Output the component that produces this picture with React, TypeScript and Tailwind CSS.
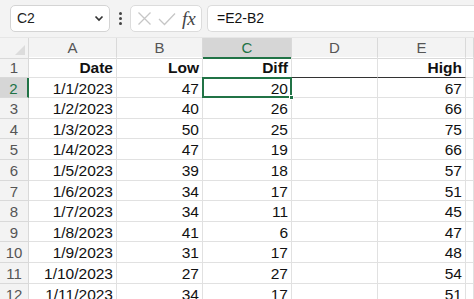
import React from "react";

const rows: [string, number, number, number][] = [
  ["1/1/2023", 47, 20, 67],
  ["1/2/2023", 40, 26, 66],
  ["1/3/2023", 50, 25, 75],
  ["1/4/2023", 47, 19, 66],
  ["1/5/2023", 39, 18, 57],
  ["1/6/2023", 34, 17, 51],
  ["1/7/2023", 34, 11, 45],
  ["1/8/2023", 41, 6, 47],
  ["1/9/2023", 31, 17, 48],
  ["1/10/2023", 27, 27, 54],
  ["1/11/2023", 34, 17, 51],
];

const cols = ["A", "B", "C", "D", "E", ""];
const grid = "grid grid-cols-[29px_88px_86px_89px_86px_88px_1fr]";
const cell = "h-[20.6px] border-r border-b border-[#e1e1e1] text-right pr-[3px] leading-[21px] whitespace-nowrap overflow-hidden text-[#111]";

export default function App() {
  return (
    <div className="w-[474px] h-[299px] overflow-hidden bg-white text-[#222]" style={{ fontFamily: '"Liberation Sans", Arial, sans-serif' }}>
      {/* Formula bar */}
      <div className="h-[37px] bg-[#f3f3f3] flex items-center pl-[10px] gap-0">
        <div className="w-[100px] h-[27px] bg-white border border-[#d4d4d4] rounded-[5px] flex items-center pl-[6px] pr-[5px] justify-between">
          <span className="text-[14px]">C2</span>
          <svg width="10" height="7" viewBox="0 0 10 7"><path d="M1.5 1.5 L5 5 L8.5 1.5" stroke="#333" strokeWidth="1.7" fill="none" /></svg>
        </div>
        <div className="w-[20px] flex flex-col items-center gap-[2px]">
          <span className="w-[3px] h-[3px] bg-[#444] rounded-full" />
          <span className="w-[3px] h-[3px] bg-[#444] rounded-full" />
          <span className="w-[3px] h-[3px] bg-[#444] rounded-full" />
        </div>
        <div className="w-[72px] h-[27px] bg-white border border-[#dcdcdc] rounded-[5px] flex items-center pl-[6px] gap-[6px]">
          <svg width="15" height="15" viewBox="0 0 15 15"><path d="M1.5 1.5 L13.5 13.5 M13.5 1.5 L1.5 13.5" stroke="#c6c6c6" strokeWidth="1.3" fill="none" /></svg>
          <svg width="18" height="14" viewBox="0 0 18 14"><path d="M1 7 L6.5 12.5 L17 1.5" stroke="#c6c6c6" strokeWidth="1.3" fill="none" /></svg>
          <span className="text-[19px] italic text-[#444] leading-none" style={{ fontFamily: '"Liberation Serif", serif' }}>fx</span>
        </div>
        <div className="ml-[5px] flex-1 h-[27px] bg-white border border-[#dcdcdc] rounded-l-[5px] border-r-0 flex items-center pl-[9px]">
          <span className="text-[14px] text-[#111]">=E2-B2</span>
        </div>
      </div>

      {/* Column headers */}
      <div className={`${grid} h-[20px] bg-[#f3f3f3] text-[15px] text-[#555] border-t border-[#e6e6e6]`}>
        <div className="relative border-r border-b border-[#d9d9d9]">
          <svg className="absolute right-[3px] bottom-[3px]" width="10" height="10" viewBox="0 0 10 10"><path d="M10 0 L10 10 L0 10 Z" fill="#dcdcdc" /></svg>
        </div>
        {cols.map((c) => (
          <div
            key={c || "f"}
            className={
              c === "C"
                ? "border-r border-[#d9d9d9] bg-[#d6d6d6] border-b-2 border-b-[#217346] text-center text-[#217346] leading-[19px]"
                : "border-r border-b border-[#d9d9d9] text-center leading-[19px]"
            }
          >
            {c}
          </div>
        ))}
      </div>

      {/* Row 1 */}
      <div className={`${grid} text-[15.5px]`}>
        <div className="h-[20.6px] border-r border-b border-[#d9d9d9] bg-[#f3f3f3] text-[#555] text-[15px] text-center leading-[21px]">1</div>
        <div className={`${cell} font-bold`}>Date</div>
        <div className={`${cell} font-bold`}>Low</div>
        <div className={`${cell} font-bold`}>Diff</div>
        <div className={`${cell} border-b-[#333]`} />
        <div className={`${cell} font-bold border-b-[#333]`}>High</div>
        <div className={cell} />
      </div>

      {rows.map(([d, lo, diff, hi], i) => {
        const sel = i === 0;
        return (
          <div key={d} className={`${grid} text-[15.5px]`}>
            <div
              className={
                sel
                  ? "h-[20.6px] border-b border-[#d9d9d9] border-r-2 border-r-[#217346] bg-[#d6d6d6] text-[#217346] text-[15px] text-center leading-[21px]"
                  : "h-[20.6px] border-r border-b border-[#d9d9d9] bg-[#f3f3f3] text-[#555] text-[15px] text-center leading-[21px]"
              }
            >
              {i + 2}
            </div>
            <div className={cell}>{d}</div>
            <div className={cell}>{lo}</div>
            <div className={sel ? `${cell} relative overflow-visible` : cell}>
              {diff}
              {sel && (
                <>
                  <div className="absolute -left-[1px] -top-[1px] -right-[1px] -bottom-[1px] border-2 border-[#217346] pointer-events-none" />
                  <div className="absolute -right-[3px] -bottom-[3px] w-[5px] h-[5px] bg-[#217346] border border-white" />
                </>
              )}
            </div>
            <div className={cell} />
            <div className={cell}>{hi}</div>
            <div className={cell} />
          </div>
        );
      })}
    </div>
  );
}
